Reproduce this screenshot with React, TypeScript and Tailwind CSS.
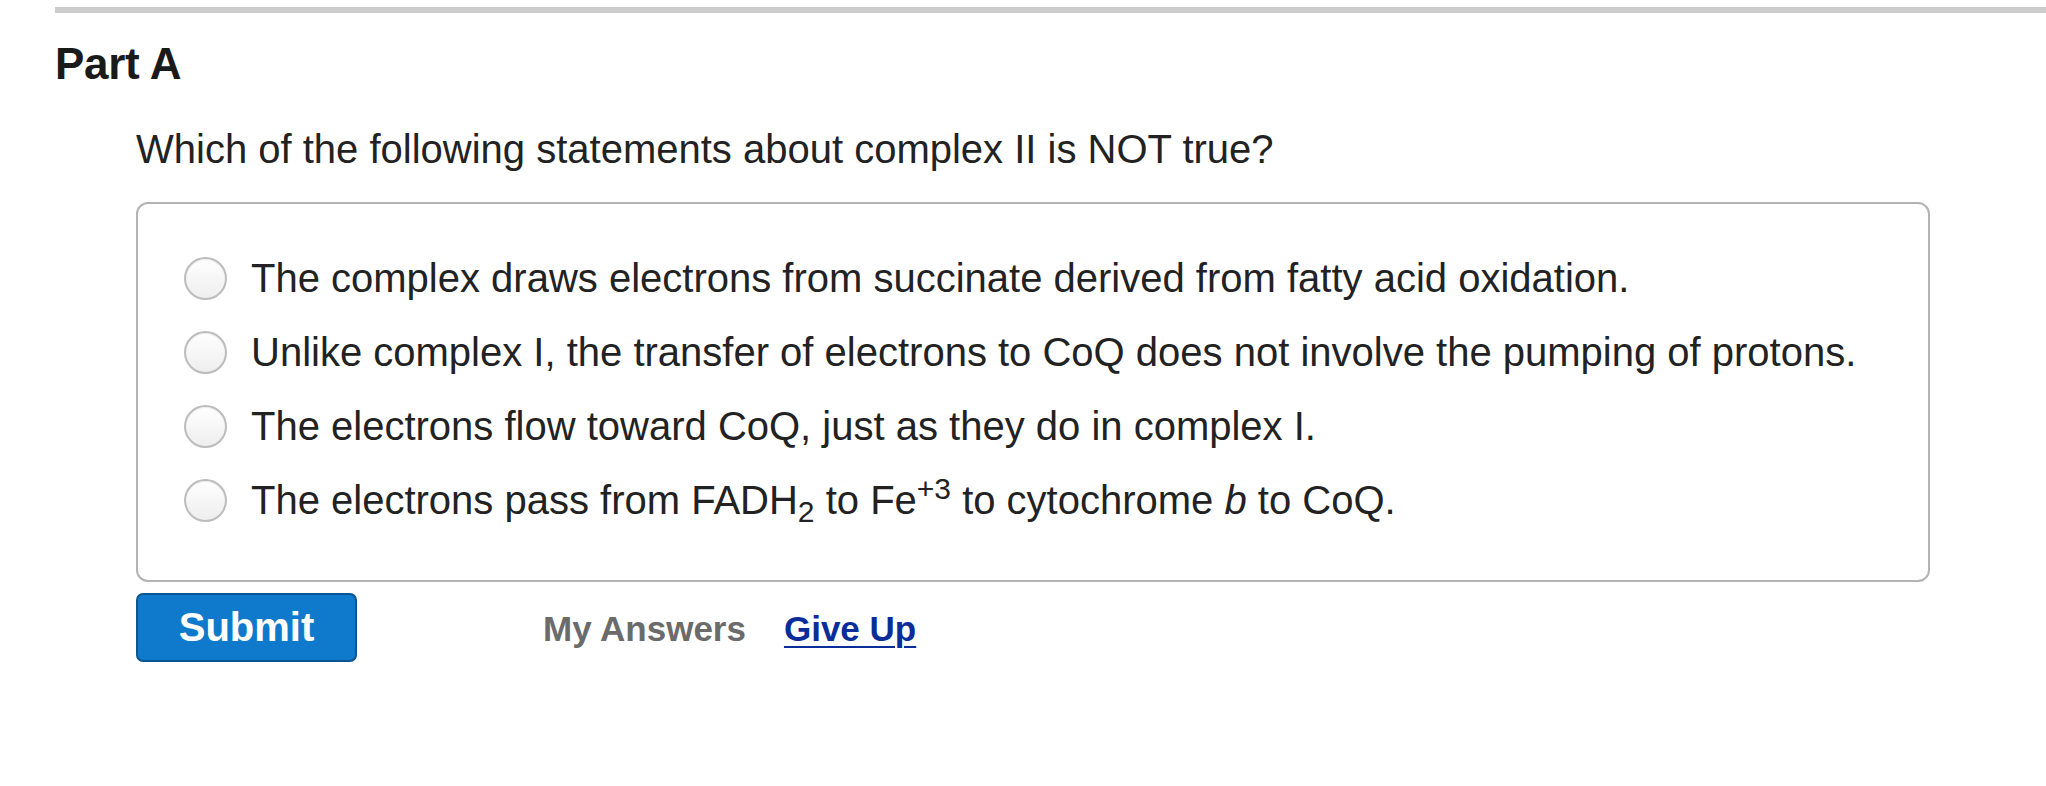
const OPTIONS: React.ReactNode[] = [
  'The complex draws electrons from succinate derived from fatty acid oxidation.',
  'Unlike complex I, the transfer of electrons to CoQ does not involve the pumping of protons.',
  'The electrons flow toward CoQ, just as they do in complex I.',
  <>
    The electrons pass from FADH<sub>2</sub> to Fe<sup>+3</sup> to cytochrome <i>b</i> to CoQ.
  </>,
];

function Radio() {
  return (
    <span className="block w-[43px] h-[43px] shrink-0 rounded-full border-2 border-[#bdbdbd] bg-linear-to-b from-white to-[#eeeeee] shadow-[inset_0_1px_1px_rgba(0,0,0,0.08)]" />
  );
}

export default function App() {
  return (
    <div
      className="w-full min-h-[786px] bg-white text-[#222]"
      style={{ fontFamily: "'Liberation Sans', Arial, Helvetica, sans-serif" }}
    >
      {/* top rule */}
      <div className="pt-[7px] pl-[55px]">
        <div className="h-[6px] bg-[#cccccc]" />
      </div>

      <h2 className="ml-[55px] mt-[29px] text-[44px] leading-[44px] font-bold text-[#1a1a1a] tracking-[-0.3px]">
        Part A
      </h2>

      <div className="ml-[136px] w-[1794px]">
        <p className="mt-[43px] text-[40px] leading-[40px]">
          Which of the following statements about complex II is NOT true?
        </p>

        {/* answer choices */}
        <div className="mt-[33px] rounded-[12px] border-2 border-[#b3b3b3] pl-[46px] pt-[37px] pb-[43px]">
          {OPTIONS.map((opt, i) => (
            <label key={i} className="flex items-center gap-[24px] h-[74px] text-[40px] leading-[74px] cursor-pointer">
              <Radio />
              <span>{opt}</span>
            </label>
          ))}
        </div>

        {/* actions */}
        <div className="mt-[11px] flex items-baseline">
          <button className="w-[221px] h-[69px] rounded-[7px] border-2 border-[#0b5593] bg-[#0f7acb] text-white text-[40px] font-bold leading-[65px]">
            Submit
          </button>
          <span className="ml-[186px] text-[35px] font-bold text-[#6b6b6b]">My Answers</span>
          <a href="#" className="ml-[38px] text-[35px] font-bold text-[#0b2d99] underline decoration-2 underline-offset-[5px]">
            Give Up
          </a>
        </div>
      </div>
    </div>
  );
}
